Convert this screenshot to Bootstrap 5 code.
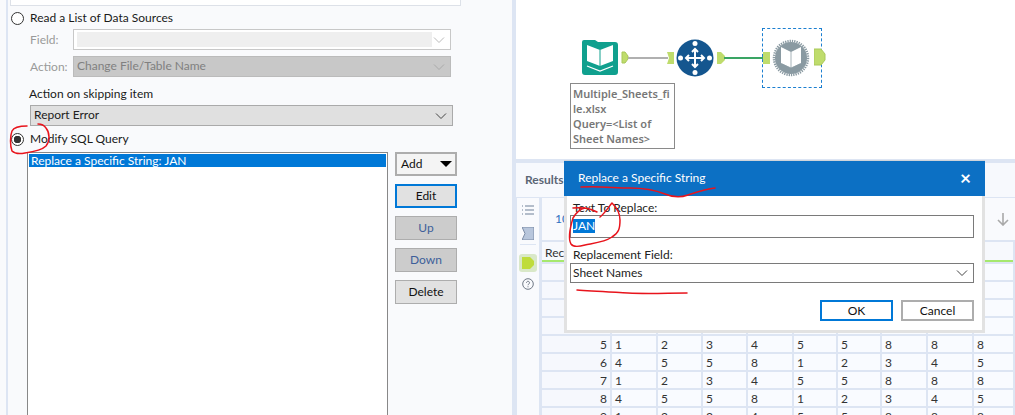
<!DOCTYPE html>
<html lang="en">
<head>
<meta charset="UTF-8">
<title>Replace a Specific String</title>
<link href="https://cdn.jsdelivr.net/npm/bootstrap@5.3.3/dist/css/bootstrap.min.css" rel="stylesheet">
<style>
    html, body { height: 100%; }
    body { width: 1015px; height: 415px; overflow: hidden; position: relative; background: #fff; color: #1a1a1a;
           font-family: "Lato", "Open Sans", sans-serif; font-size: 12px; line-height: 14px; }

    /* left config pane */
    .cfg-pane { width: 516px; height: 415px; background: #f9fafc; border-right: 4px solid #dde5f3; overflow: hidden; flex: none; padding-left: 6px; }
    .cfg-inner { border-left: 2px solid #dde5f3; height: 100%; padding-left: 2px; }
    .cfg-topbox { width: 451px; height: 6px; background: #fff; border: 1px solid #dde1e8; border-top: 0; }
    .radio-row { height: 14px; padding-left: 1px; gap: 6px; }
    .radio-row .form-check-input { width: 13px; height: 13px; margin: 0; flex: none; background-color: #fff; border: 1px solid #333; background-image: none; box-shadow: none; }
    .radio-row .form-check-input:checked { background-color: #fff; border-color: #333; background-image: radial-gradient(circle, #333 0 3.5px, transparent 4px); }
    .field-row { height: 21px; padding-left: 20px; }
    .field-lbl { width: 43px; color: #9a9a9a; }
    .win-select { font-size: 12px; line-height: 14px; border-radius: 0; padding: 2px 20px 2px 3px; min-height: 0; height: 21px; background-size: 12px 8px; background-position: right 5px center; box-shadow: none;
                  background-image: url("data:image/svg+xml,%3csvg xmlns='http://www.w3.org/2000/svg' viewBox='0 0 12 8'%3e%3cpath fill='none' stroke='%23444' d='M1 1.500l5 5 5-5'/%3e%3c/svg%3e"); }
    .sel-blank { width: 378px; background-color: #fff; border: 1px solid #c8c8c8; position: relative;
                 background-image: url("data:image/svg+xml,%3csvg xmlns='http://www.w3.org/2000/svg' viewBox='0 0 12 8'%3e%3cpath fill='none' stroke='%23bbb' d='M1 1.500l5 5 5-5'/%3e%3c/svg%3e"); }
    .sel-blank-fill { display: block; width: 355px; height: 15px; background: #efefef; }
    .sel-off { width: 378px; background-color: #c8c8c8; border: 1px solid #bbb; color: #808080;
               background-image: url("data:image/svg+xml,%3csvg xmlns='http://www.w3.org/2000/svg' viewBox='0 0 12 8'%3e%3cpath fill='none' stroke='%23aaa' d='M1 1.500l5 5 5-5'/%3e%3c/svg%3e"); }
    .skip-lbl { margin: 10px 0 4px 19px; }
    .sel-skip { width: 423px; margin-left: 20px; background-color: #e0e0e0; border: 1px solid #aaa; color: #222; }
    .query-row { margin-top: 6px; }
    .query-body { margin-top: 6px; margin-left: 17px; gap: 7px; }
    .query-list { width: 361px; height: 300px; background: #fff; border: 1px solid #888; border-radius: 0; padding: 1px; }
    .query-list .list-group-item { padding: 0 2px; border: 0; border-radius: 0; font-size: 12px; line-height: 13px; height: 13px; background: #0078d7; color: #fff; }
    .btn-stack { gap: 8px; }
    .win-btn { width: 62px; height: 24px; padding: 0; border-radius: 0; font-size: 12px; line-height: 20px; background: #e1e1e1; border: 1px solid #adadad; color: #111; }
    .win-btn-add { border: 2px solid #adadad; display: flex; align-items: center; justify-content: space-between; padding: 0 3px 0 4px; background: #f4f4f4; }
    .win-btn-edit { border: 2px solid #0078d7; }
    .win-btn-off { background: #ccc; color: #3d5f9a; }
    .tri-down { width: 0; height: 0; border-left: 6px solid transparent; border-right: 6px solid transparent; border-top: 6px solid #000; }

    /* workflow canvas */
    .work-pane { min-width: 0; }
    .canvas-area { height: 159px; position: relative; background: #fff; }
    .node { position: absolute; display: block; }
    .node-note { position: absolute; left: 54px; top: 83px; width: 105px; height: 66px; border: 1px solid #8a8a8a; padding: 2px 0 0 2px; background: #fff;
                 color: #777; font-family: "Noto Sans", sans-serif; font-weight: 600; font-size: 11px; line-height: 15px; }
    .node-sel { position: absolute; left: 246px; top: 28px; width: 60px; height: 60px; border: 1px dashed #1c7fd0; }

    /* results */
    .results-area { height: 256px; background: #f7f9fd; border-top: 4px solid #dde5f3; position: relative; }
    .results-head { height: 34px; padding-left: 9px; font-weight: 700; color: #5b6675; font-size: 12px; }
    .results-main { height: 218px; background: #dde5f3; padding-top: 1px; }
    .side-tools { width: 22px; background: #f9fafd; margin-left: 1px; padding-top: 7px; flex: none; }
    .tool-flag { margin-top: 12px; }
    .tool-sep { width: 16px; height: 1px; background: #dde5f3; margin-top: 4px; }
    .tool-on { background: #d9e8c8; border-radius: 3px; padding: 3px; margin-top: 9px; }
    .tool-help { margin-top: 6px; }
    .grid-wrap { min-width: 0; background: #dde5f3; padding-left: 1px; }
    .grid-bar { height: 42px; margin-left: 2px; background: #f9fafd; padding-left: 13px; padding-right: 6px; color: #2f6fc0; font-size: 12px; }
    .result-grid { table-layout: fixed; border-collapse: separate; border-spacing: 2px; width: 475px; margin: 0; background: #dde5f3; }
    .result-grid th, .result-grid td { height: 16px; padding: 1px 0 0 3px; font-size: 12px; line-height: 15px; background: #f9fbff; color: #333; font-weight: 400; overflow: hidden; white-space: nowrap; border: 0; }
    .result-grid th { height: 20px; background: #f7f9fd; border-bottom: 2px solid #a6e86e; }
    .result-grid td.rec-no { text-align: right; padding: 1px 3px 0 0; background: #f6f8fd; }

    /* dialog */
    .dlg-box { position: absolute; left: 564px; top: 161px; width: 421px; height: 172px; border: 0; border-radius: 0; background: #fff; box-shadow: 0 -1px 0 #d0d4da; }
    .dlg-head { background: #0c70c4; color: #fff; height: 35px; padding: 0 14px 2px 14px; border: 0; border-radius: 0; font-size: 12px; flex: none; }
    .dlg-x { font-size: 19px; font-weight: 700; line-height: 1; }
    .dlg-body { height: 137px; padding: 4px 0 0 0; border: 3px solid #e2e2e2; border-top: 0; }
    .dlg-lbl { display: block; margin: 0 0 0 6px; font-size: 12px; line-height: 15px; color: #222; }
    .dlg-input { height: 23px; width: 404px; margin-left: 3px; border: 1px solid #7a7a7a; border-radius: 0; padding: 1px 2px; font-size: 12px; line-height: 18px; box-shadow: none; }
    .dlg-input span { background: #0078d7; color: #fff; display: inline-block; line-height: 14px; }
    .dlg-select { width: 404px; height: 20px; margin: 1px 0 0 3px; border: 1px solid #7a7a7a; padding: 2px 20px 2px 2px; background-color: #fff; color: #222; }
    .dlg-btns { gap: 8px; margin: 17px 0 0 3px; width: 404px; }
    .dlg-btn { width: 73px; height: 21px; padding: 0; border-radius: 0; font-size: 12px; line-height: 17px; background: #fff; color: #111; border: 2px solid #adadad; }
    .dlg-btn-ok { border-color: #0078d7; }

    .ink-layer { position: absolute; left: 0; top: 0; width: 1015px; height: 415px; pointer-events: none; }
</style>
</head>
<body>

<div class="d-flex">
    <div class="cfg-pane">
        <div class="cfg-inner">
            <div class="cfg-topbox"></div>
            <div class="radio-row d-flex align-items-center" style="margin-top:5px">
                <input class="form-check-input" type="radio" name="mode" id="modeList">
                <label for="modeList">Read a List of Data Sources</label>
            </div>
            <div class="field-row d-flex align-items-center" style="margin-top:4px">
                <span class="field-lbl">Field:</span>
                <div class="form-select win-select sel-blank"><span class="sel-blank-fill"></span></div>
            </div>
            <div class="field-row d-flex align-items-center" style="margin-top:6px">
                <span class="field-lbl">Action:</span>
                <div class="form-select win-select sel-off">Change File/Table Name</div>
            </div>
            <div class="skip-lbl">Action on skipping item</div>
            <div class="form-select win-select sel-skip">Report Error</div>
            <div class="radio-row query-row d-flex align-items-center">
                <input class="form-check-input" type="radio" name="mode" id="modeSql" checked>
                <label for="modeSql">Modify SQL Query</label>
            </div>
            <div class="query-body d-flex">
                <div class="query-list list-group">
                    <div class="list-group-item">Replace a Specific String: JAN</div>
                </div>
                <div class="btn-stack d-flex flex-column">
                    <button type="button" class="btn win-btn win-btn-add"><span>Add</span><span class="tri-down"></span></button>
                    <button type="button" class="btn win-btn win-btn-edit">Edit</button>
                    <button type="button" class="btn win-btn win-btn-off">Up</button>
                    <button type="button" class="btn win-btn win-btn-off">Down</button>
                    <button type="button" class="btn win-btn">Delete</button>
                </div>
            </div>
        </div>
    </div>

    <div class="work-pane flex-grow-1">
        <div class="canvas-area">
            <!-- input tool -->
            <svg class="node" style="left:66px;top:39px" width="48" height="38" viewBox="0 0 48 38">
                <path d="M0 3a2 2 0 0 1 2-2h11l3 2h17a3 3 0 0 1 3 3v27a3 3 0 0 1-3 3H3a3 3 0 0 1-3-3z" fill="#10a08e"/>
                <path d="M18 11L5 6v16l13 5 13-5V6z" fill="#fff"/>
                <path d="M18 11v16" stroke="#10a08e" stroke-width="1"/>
                <path d="M5 27l13 5 13-5" fill="none" stroke="#fff" stroke-width="1.300"/>
                <path d="M40 13h3l3 4v3l-3 4h-3z" fill="#bfdc6c" stroke="#a9c85a"/>
            </svg>
            <div class="node" style="left:112px;top:57px;width:40px;height:2px;background:#b0b0b0"></div>
            <svg class="node" style="left:151px;top:51px" width="8" height="14" viewBox="0 0 8 14"><path d="M0 1h7v12H0l2-6z" fill="#bfdc6c"/></svg>
            <!-- select tool -->
            <svg class="node" style="left:160px;top:39px" width="38" height="38" viewBox="0 0 38 38">
                <circle cx="19" cy="19" r="18.500" fill="#14568f"/>
                <g fill="#fff">
                    <circle cx="19" cy="4.500" r="2.500"/><circle cx="19" cy="33.500" r="2.500"/>
                    <circle cx="4.500" cy="19" r="2.500"/><circle cx="33.500" cy="19" r="2.500"/>
                </g>
                <path d="M19 10v18M10 19h18M16 13l3-3 3 3M16 25l3 3 3-3M13 16l-3 3 3 3M25 16l3 3-3 3" fill="none" stroke="#fff" stroke-width="2"/>
            </svg>
            <svg class="node" style="left:201px;top:51px" width="8" height="14" viewBox="0 0 8 14"><path d="M0 1h4l4 4v4l-4 4H0z" fill="#bfdc6c"/></svg>
            <div class="node" style="left:208px;top:57px;width:40px;height:2px;background:#3aa564"></div>
            <!-- dynamic input tool, selected -->
            <div class="node-sel"></div>
            <svg class="node" style="left:247px;top:51px" width="8" height="14" viewBox="0 0 8 14"><path d="M0 1h7v12H0z" fill="#bfdc6c"/></svg>
            <svg class="node" style="left:256px;top:39px" width="38" height="38" viewBox="0 0 38 38">
                <circle cx="19" cy="19" r="16" fill="#8a9aa2"/>
                <circle cx="19" cy="19" r="17" fill="none" stroke="#8a9aa2" stroke-width="2.500" stroke-dasharray="1.300 1"/>
                <path d="M19 13L9 8v16l10 5 10-5V8z" fill="#fff"/>
                <path d="M19 13v16" stroke="#a6b3b9"/>
                <path d="M10 25l9 4 9-4" fill="none" stroke="#8a9aa2" stroke-width=".8"/>
            </svg>
            <svg class="node" style="left:298px;top:48px" width="12" height="18" viewBox="0 0 12 18"><path d="M0 1h7l4 5v6l-4 5H0z" fill="#bfdc6c" stroke="#a9c85a"/></svg>

            <div class="node-note">Multiple_Sheets_fi<br>le.xlsx<br>Query=&lt;List of<br>Sheet Names&gt;</div>
        </div>

        <div class="results-area">
            <div class="results-head d-flex align-items-center">Results</div>
            <div class="results-main d-flex">
                <div class="side-tools d-flex flex-column align-items-center">
                    <svg width="12" height="10" viewBox="0 0 12 10" fill="none" stroke="#6f8098"><path d="M0 1h1M3 1h9M0 5h1M3 5h9M0 9h1M3 9h9"/></svg>
                    <svg class="tool-flag" width="12" height="13" viewBox="0 0 12 13"><path d="M0 0h12v13H0l3-6.500z" fill="#b8c6dc" stroke="#7c8ca6"/></svg>
                    <span class="tool-sep"></span>
                    <span class="tool-on d-flex"><svg width="12" height="12" viewBox="0 0 12 12"><path d="M0 0h8l4 4v4l-4 4H0z" fill="#bfdc3c"/></svg></span>
                    <svg class="tool-help" width="12" height="12" viewBox="0 0 12 12" fill="none" stroke="#6f7885"><circle cx="6" cy="6" r="5.300"/><path d="M4.500 4.700a1.500 1.500 0 1 1 2.200 1.400c-.5.300-.7.500-.7 1.100M6 8.300v1"/></svg>
                </div>
                <div class="grid-wrap flex-grow-1">
                    <div class="grid-bar d-flex align-items-center justify-content-between">
                        <span>10</span>
                        <svg width="12" height="13" viewBox="0 0 12 13" fill="none" stroke="#a9a9a9" stroke-width="1.600"><path d="M6 0v12M1 7l5 5 5-5"/></svg>
                    </div>
                    <table class="result-grid table">
                        <colgroup>
                            <col style="width:68px"><col style="width:44px"><col style="width:43px"><col style="width:43px">
                            <col style="width:44px"><col style="width:42px"><col style="width:42px"><col style="width:44px">
                            <col style="width:44px"><col style="width:39px">
                        </colgroup>
                        <thead><tr><th>Rec</th><th colspan="9"></th></tr></thead>
                        <tbody id="gridRows"></tbody>
                    </table>
                </div>
            </div>
        </div>
    </div>
</div>

<div class="dlg-box modal-content">
    <div class="dlg-head d-flex align-items-center justify-content-between">
        <span>Replace a Specific String</span>
        <span class="dlg-x">&#215;</span>
    </div>
    <div class="dlg-body">
        <label class="dlg-lbl">Text To Replace:</label>
        <div class="form-control dlg-input"><span>JAN</span></div>
        <label class="dlg-lbl" style="margin-top:9px">Replacement Field:</label>
        <div class="form-select win-select dlg-select">Sheet Names</div>
        <div class="dlg-btns d-flex justify-content-end">
            <button type="button" class="btn dlg-btn dlg-btn-ok">OK</button>
            <button type="button" class="btn dlg-btn">Cancel</button>
        </div>
    </div>
</div>

<!-- red pen marks over the screenshot -->
<svg class="ink-layer" viewBox="0 0 1015 415" fill="none" stroke="#e8141c" stroke-width="1.500" stroke-linecap="round" stroke-linejoin="round">
    <path d="M27 126C20 126 14 127 12 131C10 136 10 146 12 151C15 154 20 154 25 153C32 152 42 150 46 146C50 141 50 133 46 128C44 125 41 124 38 124"/>
    <path d="M581 187C600 186 615 188 630 188C645 188 655 190 665 194C672 197 680 198 688 195C697 192 705 189 715 188"/>
    <path d="M573 208C582 207 590 208 597 212M600 217C604 214 608 208 612 203C616 207 620 213 620 220C620 228 619 233 612 237C605 242 595 243 585 245C578 247 573 247 571 244C568 239 570 228 573 218C576 213 580 209 585 208"/>
    <path d="M577 290C590 291 610 292 628 293C648 294 668 293 687 293"/>
</svg>

<script>
    const rowA = [1, 2, 3, 4, 5, 5, 8, 8, 8];
    const rowB = [4, 5, 5, 8, 1, 2, 3, 4, 5];
    let html = '';
    for (let n = 1; n <= 9; n++) {
        // rows 1-4 sit behind the dialog, nothing of them shows
        if (n < 5) {
            html += '<tr><td class="rec-no"></td>' + '<td></td>'.repeat(9) + '</tr>';
            continue;
        }
        const vals = n % 2 ? rowA : rowB;
        html += `<tr><td class="rec-no">${n}</td>${vals.map(v => `<td>${v}</td>`).join('')}</tr>`;
    }
    document.getElementById('gridRows').innerHTML = html;
</script>
<script src="https://cdn.jsdelivr.net/npm/bootstrap@5.3.3/dist/js/bootstrap.bundle.min.js"></script>
</body>
</html>
